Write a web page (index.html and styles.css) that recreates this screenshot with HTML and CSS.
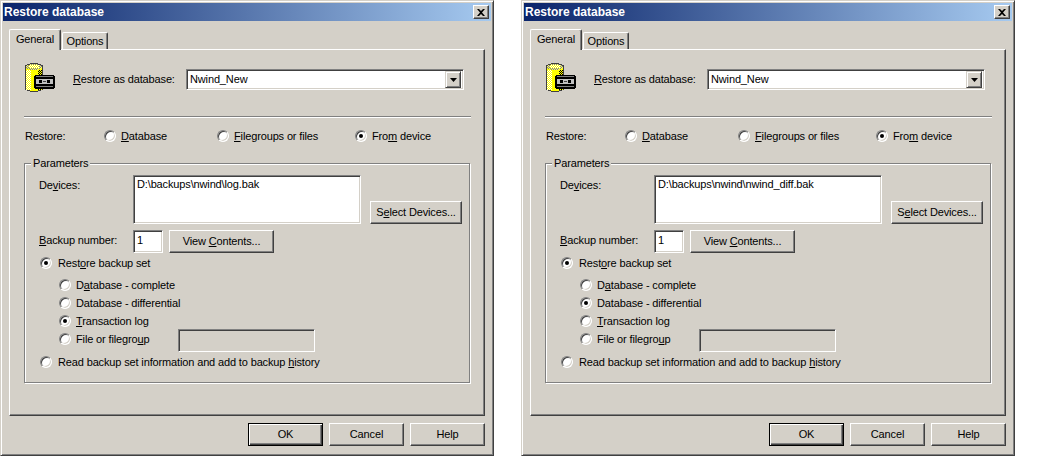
FILE: index.html
```html
<!DOCTYPE html>
<html lang="en">
<head>
<meta charset="utf-8">
<title>Restore database</title>
<link rel="stylesheet" href="styles.css">
</head>
<body>
<svg class="defs" width="0" height="0" aria-hidden="true">
  <defs>
    <pattern id="ditherW" width="2" height="2" patternUnits="userSpaceOnUse"><rect width="2" height="2" fill="#ffff00"/><rect width="1" height="1" fill="#fff"/><rect x="1" y="1" width="1" height="1" fill="#fff"/></pattern>
    <pattern id="ditherK" width="2" height="2" patternUnits="userSpaceOnUse"><rect width="2" height="2" fill="#ffff00"/><rect width="1" height="1" fill="#000"/><rect x="1" y="1" width="1" height="1" fill="#000"/></pattern>
    <pattern id="ditherG" width="2" height="2" patternUnits="userSpaceOnUse"><rect width="2" height="2" fill="#ffff66"/><rect width="1" height="1" fill="#808080"/><rect x="1" y="1" width="1" height="1" fill="#808080"/></pattern>
    <symbol id="dbicon" viewBox="0 0 32 32">
      <path d="M1 4h2V3h3V2h8v1h3v1h2v25h-2v1h-3v1H6v-1H3v-1H1z" fill="#404040"/>
      <path d="M2 5h1V4h3V3h8v1h3v1h1v23h-1v1h-3v1H6v-1H3v-1H2z" fill="#ffff00"/>
      <rect x="2" y="9" width="5" height="20" fill="url(#ditherW)"/>
      <rect x="14" y="9" width="4" height="20" fill="url(#ditherK)"/>
      <path d="M3 4h3V3h8v1h3v1h1v2h-1v1h-3v1H6V8H3V7H2V5h1z" fill="url(#ditherG)"/>
      <rect x="5" y="4" width="10" height="3" fill="url(#ditherW)"/>
      <path d="M11 14h19v1h1v12h-1v1H11v-1h-1V15h1z" fill="#000"/>
      <rect x="12" y="15" width="17" height="1" fill="#808080"/>
      <rect x="12" y="25" width="17" height="1" fill="#808080"/>
      <rect x="12" y="18" width="17" height="5" fill="#c0c0c0"/>
      <rect x="15" y="19" width="3" height="3" fill="#000"/>
      <rect x="23" y="19" width="3" height="3" fill="#000"/>
      <rect x="19" y="20" width="3" height="1" fill="#404040"/>
    </symbol>
  </defs>
</svg>

<main class="desktop">
  <section class="window">
    <header class="titlebar"><span class="title">Restore database</span><span class="close"><svg width="8" height="7" viewBox="0 0 8 7"><path d="M0 0h2l2 2 2-2h2L5 3.500 8 7H6L4 5 2 7H0l3-3.500z" fill="#000"/></svg></span></header>
    <nav class="tabs"><span class="tab tab-active">General</span><span class="tab">Options</span></nav>
    <div class="panel">
      <div class="db-row">
        <svg class="db-icon" width="32" height="32"><use href="#dbicon"/></svg>
        <label class="db-label"><u>R</u>estore as database:</label>
        <div class="combo"><span class="combo-text">Nwind_New</span><span class="combo-btn"><svg width="7" height="4" viewBox="0 0 7 4"><path d="M0 0h7L3.500 4z" fill="#000"/></svg></span></div>
      </div>
      <div class="separator"></div>
      <div class="restore-row">
        <span class="restore-label">Restore:</span>
        <span class="opt opt-db"><i class="radio"></i><span><u>D</u>atabase</span></span>
        <span class="opt opt-fg"><i class="radio"></i><span><u>F</u>ilegroups or files</span></span>
        <span class="opt"><i class="radio on"></i><span>Fro<u>m</u> device</span></span>
      </div>
      <fieldset class="group">
        <legend class="legend">Parameters</legend>
        <div class="devices-row">
          <span class="field-label">De<u>v</u>ices:</span>
          <div class="listbox">D:\backups\nwind\log.bak</div>
          <button class="btn btn-select" type="button">S<u>e</u>lect Devices...</button>
        </div>
        <div class="backup-row">
          <span class="field-label"><u>B</u>ackup number:</span>
          <div class="numbox">1</div>
          <button class="btn btn-view" type="button">View <u>C</u>ontents...</button>
        </div>
        <div class="opt main-opt set-opt"><i class="radio on"></i><span>Rest<u>o</u>re backup set</span></div>
        <div class="subs">
          <div class="opt sub"><i class="radio"></i><span>D<u>a</u>tabase - complete</span></div>
          <div class="opt sub"><i class="radio"></i><span>Database - differential</span></div>
          <div class="opt sub"><i class="radio on"></i><span><u>T</u>ransaction log</span></div>
          <div class="opt sub"><i class="radio"></i><span class="file-label">File or filegro<u>u</u>p</span><div class="filebox"></div></div>
        </div>
        <div class="opt main-opt read-opt"><i class="radio"></i><span>Read backup set information and add to backup <u>h</u>istory</span></div>
      </fieldset>
    </div>
    <footer class="footer">
      <button class="btn btn-foot btn-default" type="button">OK</button>
      <button class="btn btn-foot" type="button">Cancel</button>
      <button class="btn btn-foot" type="button">Help</button>
    </footer>
  </section>

  <section class="window">
    <header class="titlebar"><span class="title">Restore database</span><span class="close"><svg width="8" height="7" viewBox="0 0 8 7"><path d="M0 0h2l2 2 2-2h2L5 3.500 8 7H6L4 5 2 7H0l3-3.500z" fill="#000"/></svg></span></header>
    <nav class="tabs"><span class="tab tab-active">General</span><span class="tab">Options</span></nav>
    <div class="panel">
      <div class="db-row">
        <svg class="db-icon" width="32" height="32"><use href="#dbicon"/></svg>
        <label class="db-label"><u>R</u>estore as database:</label>
        <div class="combo"><span class="combo-text">Nwind_New</span><span class="combo-btn"><svg width="7" height="4" viewBox="0 0 7 4"><path d="M0 0h7L3.500 4z" fill="#000"/></svg></span></div>
      </div>
      <div class="separator"></div>
      <div class="restore-row">
        <span class="restore-label">Restore:</span>
        <span class="opt opt-db"><i class="radio"></i><span><u>D</u>atabase</span></span>
        <span class="opt opt-fg"><i class="radio"></i><span><u>F</u>ilegroups or files</span></span>
        <span class="opt"><i class="radio on"></i><span>Fro<u>m</u> device</span></span>
      </div>
      <fieldset class="group">
        <legend class="legend">Parameters</legend>
        <div class="devices-row">
          <span class="field-label">De<u>v</u>ices:</span>
          <div class="listbox">D:\backups\nwind\nwind_diff.bak</div>
          <button class="btn btn-select" type="button">S<u>e</u>lect Devices...</button>
        </div>
        <div class="backup-row">
          <span class="field-label"><u>B</u>ackup number:</span>
          <div class="numbox">1</div>
          <button class="btn btn-view" type="button">View <u>C</u>ontents...</button>
        </div>
        <div class="opt main-opt set-opt"><i class="radio on"></i><span>Rest<u>o</u>re backup set</span></div>
        <div class="subs">
          <div class="opt sub"><i class="radio"></i><span>D<u>a</u>tabase - complete</span></div>
          <div class="opt sub"><i class="radio on"></i><span>Database - differential</span></div>
          <div class="opt sub"><i class="radio"></i><span><u>T</u>ransaction log</span></div>
          <div class="opt sub"><i class="radio"></i><span class="file-label">File or filegro<u>u</u>p</span><div class="filebox"></div></div>
        </div>
        <div class="opt main-opt read-opt"><i class="radio"></i><span>Read backup set information and add to backup <u>h</u>istory</span></div>
      </fieldset>
    </div>
    <footer class="footer">
      <button class="btn btn-foot btn-default" type="button">OK</button>
      <button class="btn btn-foot" type="button">Cancel</button>
      <button class="btn btn-foot" type="button">Help</button>
    </footer>
  </section>
</main>
</body>
</html>
```
FILE: styles.css
```css
* { box-sizing: border-box; }
html, body { margin: 0; padding: 0; background: #fff; }
body { font: 11px/13px "Liberation Sans", Arial, sans-serif; letter-spacing: -0.14px; color: #000; overflow: hidden; }
u { text-underline-offset: 1px; }
.defs { position: absolute; }
.desktop { display: flex; gap: 27px; width: 1051px; height: 458px; }

.window {
  width: 494px; height: 456px; padding: 2px;
  background: #d4d0c8;
  border: 1px solid; border-color: #d4d0c8 #404040 #404040 #d4d0c8;
  box-shadow: inset 1px 1px 0 #fff, inset -1px -1px 0 #808080;
  flex: none;
}
.titlebar {
  height: 18px; display: flex; align-items: center; justify-content: space-between;
  padding: 0 2px 0 1px;
  background: linear-gradient(90deg, #0a246a, #a6caf0);
}
.title { color: #fff; font-weight: bold; font-size: 12px; letter-spacing: 0; }
.close {
  width: 16px; height: 14px; display: flex; align-items: center; justify-content: center;
  background: #d4d0c8;
  border: 1px solid; border-color: #fff #404040 #404040 #fff;
  box-shadow: inset -1px -1px 0 #808080;
}

.tabs { display: flex; align-items: flex-end; height: 20px; margin: 8px 0 0 6px; }
.tab {
  height: 17px; width: 46px; margin-left: 1px; text-align: center; padding-top: 2px;
  background: #d4d0c8;
  border: 1px solid; border-bottom: 0; border-color: #fff #404040 #fff #fff;
  border-radius: 2px 2px 0 0;
  box-shadow: inset -1px 0 0 #808080;
}
.tab-active {
  position: relative; z-index: 1;
  width: 52px; height: 21px; margin: 0 0 -1px 0; padding-top: 3px;
}

.panel {
  width: 476px; height: 367px; margin-left: 6px;
  border: 1px solid; border-color: #fff #404040 #404040 #fff;
  box-shadow: inset -1px -1px 0 #808080;
}
.db-row { display: flex; align-items: flex-start; margin: 11px 0 0 14px; height: 32px; }
.db-icon { flex: none; }
.db-label { width: 113px; margin: 12px 0 0 17px; flex: none; }
.combo {
  width: 278px; height: 21px; margin-top: 8px; display: flex; justify-content: space-between; align-items: center;
  background: #fff; padding: 2px;
  border: 1px solid; border-color: #808080 #fff #fff #808080;
  box-shadow: inset 1px 1px 0 #404040, inset -1px -1px 0 #d4d0c8;
}
.combo-text { padding-left: 1px; }
.combo-btn {
  width: 16px; height: 17px; display: flex; align-items: center; justify-content: center;
  background: #d4d0c8; margin-right: 0;
  border: 1px solid; border-color: #d4d0c8 #404040 #404040 #d4d0c8;
  box-shadow: inset 1px 1px 0 #fff, inset -1px -1px 0 #808080;
}
.separator {
  width: 447px; height: 2px; margin: 23px 0 0 14px;
  background: #808080; border-bottom: 1px solid #fff;
}
.restore-row { display: flex; align-items: center; height: 16px; margin: 10px 0 0 15px; }
.restore-label { width: 79px; }
.opt { display: flex; align-items: center; gap: 5px; height: 16px; }
.opt-db { width: 113px; }
.opt-fg { width: 138px; }
.radio {
  flex: none; width: 12px; height: 12px; border-radius: 50%;
  display: flex; align-items: center; justify-content: center;
  background: #fff;
  border: 1px solid; border-color: #808080 #fff #fff #808080;
  box-shadow: inset 1px 1px 0 #404040, inset -1px -1px 0 #d4d0c8;
}
.radio.on::after { content: ""; width: 4px; height: 4px; border-radius: 50%; background: #000; }

.group {
  position: relative;
  width: 446px; height: 220px; margin: 19px 0 0 14px; padding: 0; min-width: 0;
  border: 1px solid #808080;
  box-shadow: 1px 1px 0 #fff, inset 1px 1px 0 #fff;
}
.legend { position: absolute; left: 6px; top: -7px; padding: 0 2px 0 2px; background: #d4d0c8; }
.devices-row { display: flex; align-items: flex-start; margin: 11px 0 0 14px; height: 49px; }
.field-label { width: 94px; flex: none; margin-top: 4px; }
.listbox {
  width: 228px; height: 49px; padding: 2px 3px; flex: none;
  background: #fff;
  border: 1px solid; border-color: #808080 #fff #fff #808080;
  box-shadow: inset 1px 1px 0 #404040, inset -1px -1px 0 #d4d0c8;
}
.btn {
  font: inherit; letter-spacing: inherit; color: #000; padding: 0; margin: 0;
  background: #d4d0c8;
  border: 1px solid; border-color: #fff #404040 #404040 #fff;
  box-shadow: inset -1px -1px 0 #808080;
  height: 23px;
}
.btn-select { width: 92px; margin: 26px 0 0 9px; }
.backup-row { display: flex; align-items: flex-start; margin: 6px 0 0 14px; height: 23px; gap: 0; }
.backup-row .field-label { margin-top: 4px; }
.numbox {
  width: 30px; height: 23px; padding: 3px 3px; background: #fff; flex: none;
  border: 1px solid; border-color: #808080 #fff #fff #808080;
  box-shadow: inset 1px 1px 0 #404040, inset -1px -1px 0 #d4d0c8;
}
.btn-view { width: 105px; margin-left: 6px; padding-bottom: 1px; }
.main-opt { gap: 6px; margin-left: 15px; }
.set-opt { margin-top: 2px; }
.subs { display: grid; row-gap: 2px; margin: 6px 0 0 34px; }
.file-label { width: 97px; flex: none; }
.filebox {
  width: 137px; height: 23px; align-self: flex-start; margin: -2px 0 0 0; flex: none;
  border: 1px solid; border-color: #808080 #fff #fff #808080;
  box-shadow: inset 1px 1px 0 #404040;
}
.read-opt { margin-top: 7px; }
.footer { display: flex; justify-content: flex-end; gap: 6px; width: 476px; margin: 7px 0 0 6px; }
.btn-foot { width: 75px; }
.btn-default { border: 1px solid #000; box-shadow: inset 1px 1px 0 #fff, inset -1px -1px 0 #404040, inset -2px -2px 0 #808080; }
```
